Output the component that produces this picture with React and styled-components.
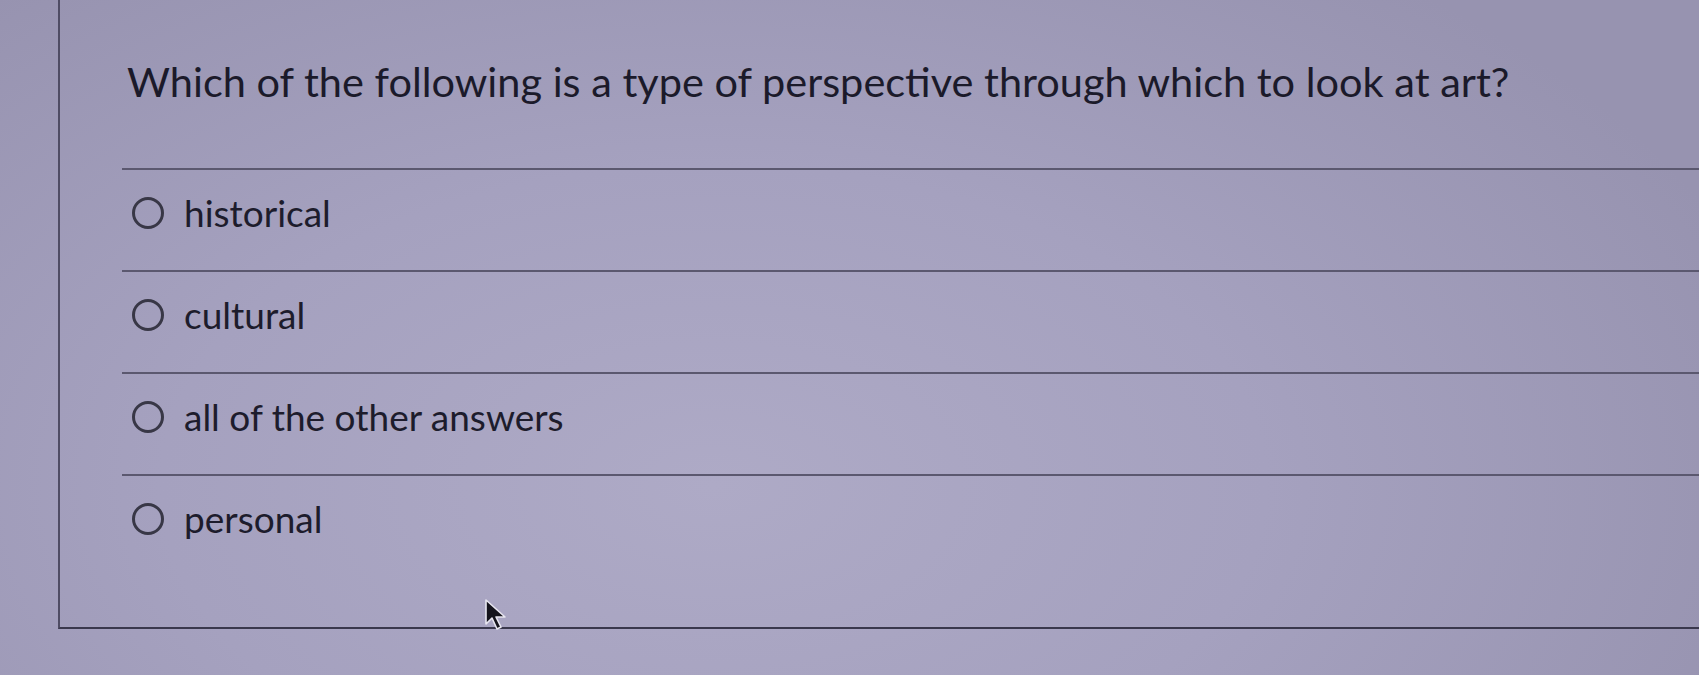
import React from 'react'
import styled, { createGlobalStyle } from 'styled-components'

const GlobalStyle = createGlobalStyle`
  html, body {
    margin: 0;
    padding: 0;
    height: 100%;
  }
  body {
    font-family: Lato, "Open Sans", sans-serif;
    background: #a19db9;
    overflow: hidden;
  }
`;

const Screen = styled.div`
  position: relative;
  width: 1699px;
  height: 675px;
  overflow: hidden;
  background:
    radial-gradient(ellipse 65% 95% at 42% 72%, #aeaac6 0%, #a5a1bf 50%, #9793b0 100%);
`;

const Card = styled.div`
  margin-left: 58px;
  margin-top: -4px;
  height: 633px;
  box-sizing: border-box;
  border-left: 2px solid #4f4c64;
  border-bottom: 2px solid #3a384d;
  padding: 0 0 0 62px;
  display: flex;
  flex-direction: column;
`;

const Question = styled.h2`
  margin: 0;
  padding: 61px 0 0 5px;
  height: 172px;
  flex: none;
  box-sizing: border-box;
  font-size: 41.5px;
  line-height: 48px;
  font-weight: 400;
  color: #1b1a2a;
  white-space: nowrap;
`;

const Options = styled.ul`
  list-style: none;
  margin: 0;
  padding: 0;
  flex: 1;
  display: flex;
  flex-direction: column;
`;

const Option = styled.li`
  display: flex;
  align-items: flex-start;
  gap: 20px;
  height: ${p => (p.$last ? 'auto' : '102px')};
  flex: ${p => (p.$last ? 1 : 'none')};
  box-sizing: border-box;
  border-top: 2px solid #5b586f;
  padding: 21px 0 0 10px;
`;

const Radio = styled.span`
  width: 32px;
  height: 32px;
  margin-top: 6px;
  box-sizing: border-box;
  border-radius: 50%;
  border: 3px solid #383746;
  flex: none;
`;

const Label = styled.span`
  font-size: 37px;
  line-height: 44px;
  color: #1d1c2c;
  white-space: nowrap;
`;

const Cursor = styled.svg`
  position: absolute;
  left: 484px;
  top: 598px;
  width: 26px;
  height: 36px;
`;

const answers = ['historical', 'cultural', 'all of the other answers', 'personal'];

export default function App() {
  return (
    <>
      <GlobalStyle />
      <Screen>
        <Card>
          <Question>Which of the following is a type of perspective through which to look at art?</Question>
          <Options>
            {answers.map((a, i) => (
              <Option key={a} $last={i === answers.length - 1}>
                <Radio />
                <Label>{a}</Label>
              </Option>
            ))}
          </Options>
        </Card>
        <Cursor viewBox="0 0 26 36">
          <path d="M2 2 L2 26 L8 20 L13 31 L17 29 L12 19 L21 19 Z" fill="#15141c" stroke="#e8e6f0" strokeWidth="1.6" strokeLinejoin="round" />
        </Cursor>
      </Screen>
    </>
  )
}
